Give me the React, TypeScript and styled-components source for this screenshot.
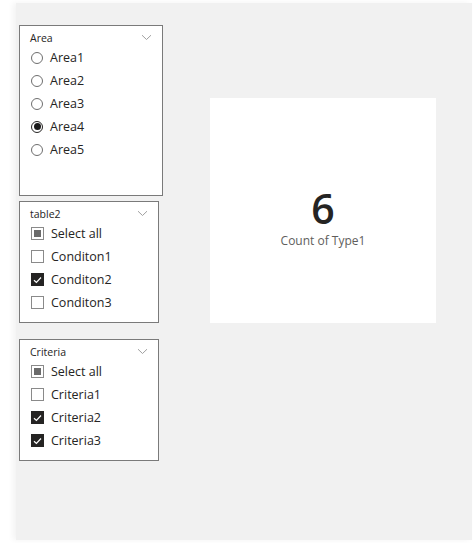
import styled, {createGlobalStyle} from 'styled-components';

const GlobalStyle = createGlobalStyle`
  html, body {
    margin: 0;
    padding: 0;
    background: #ffffff;
  }

  body {
    font-family: 'Open Sans', 'Noto Sans', sans-serif;
    color: #252423;
  }
`;

type Option = {label: string; state: 'on' | 'off' | 'partial'};

const Page = styled.div`
  padding: 3px 0 0 16px;
  width: 474px;
  height: 543px;
  box-sizing: border-box;
`;

const Canvas = styled.div`
  display: flex;
  align-items: flex-start;
  width: 456px;
  height: 537px;
  padding: 22px 0 0 3px;
  box-sizing: border-box;
  background: #f1f1f1;
  box-shadow: -3px 0 6px rgba(0, 0, 0, 0.05);
`;

const Column = styled.div`
  display: flex;
  flex-direction: column;
`;

const Slicer = styled.div<{$width: number; $height: number; $gap: number}>`
  width: ${({$width}) => $width}px;
  height: ${({$height}) => $height}px;
  margin-bottom: ${({$gap}) => $gap}px;
  box-sizing: border-box;
  border: 1px solid #7a7a7a;
  background: #ffffff;
  padding: 3px 10px 0 10px;
`;

const Header = styled.div`
  display: flex;
  align-items: center;
  justify-content: space-between;
  height: 17px;
  font-size: 10.5px;
  color: #252423;
`;

const Chevron = () => (
  <svg width="11" height="7" viewBox="0 0 11 7">
    <path d="M1 1.2 L5.5 5.5 L10 1.2" fill="none" stroke="#a0a0a0" strokeWidth="1" />
  </svg>
);

const Item = styled.div`
  display: flex;
  align-items: center;
  gap: 7px;
  height: 23px;
  padding-left: 1px;
  font-size: 12.5px;
  color: #252423;
`;

const Radio = styled.span<{$on: boolean}>`
  width: 12px;
  height: 12px;
  box-sizing: border-box;
  border-radius: 50%;
  border: 1px solid ${({$on}) => ($on ? '#252423' : '#6e6e6e')};
  display: flex;
  align-items: center;
  justify-content: center;

  &::after {
    content: '';
    display: ${({$on}) => ($on ? 'block' : 'none')};
    width: 7px;
    height: 7px;
    border-radius: 50%;
    background: #1a1a1a;
  }
`;

const Box = styled.span<{$state: Option['state']}>`
  width: 13px;
  height: 13px;
  box-sizing: border-box;
  border: 1px solid ${({$state}) => ($state === 'on' ? '#252423' : '#8a8a8a')};
  background: ${({$state}) => ($state === 'on' ? '#252423' : '#ffffff')};
  display: flex;
  align-items: center;
  justify-content: center;

  &::after {
    content: '';
    display: ${({$state}) => ($state === 'partial' ? 'block' : 'none')};
    width: 7px;
    height: 7px;
    background: #6b6b6b;
  }
`;

const Check = () => (
  <svg width="9" height="8" viewBox="0 0 9 8">
    <path d="M1 4.2 L3.4 6.5 L8 1.5" fill="none" stroke="#ffffff" strokeWidth="1.2" />
  </svg>
);

const Card = styled.div`
  margin: 73px 0 0 47px;
  width: 226px;
  height: 225px;
  background: #ffffff;
  display: flex;
  flex-direction: column;
  align-items: center;
  justify-content: center;
  padding-top: 14px;
  box-sizing: border-box;
`;

const Value = styled.div`
  font-size: 41px;
  font-weight: 600;
  line-height: 44px;
  color: #252423;
`;

const Caption = styled.div`
  font-size: 12px;
  color: #605e5c;
  margin-top: 2px;
`;

const areas = ['Area1', 'Area2', 'Area3', 'Area4', 'Area5'];

const conditions: Option[] = [
  {label: 'Select all', state: 'partial'},
  {label: 'Conditon1', state: 'off'},
  {label: 'Conditon2', state: 'on'},
  {label: 'Conditon3', state: 'off'},
];

const criteria: Option[] = [
  {label: 'Select all', state: 'partial'},
  {label: 'Criteria1', state: 'off'},
  {label: 'Criteria2', state: 'on'},
  {label: 'Criteria3', state: 'on'},
];

const CheckList = ({options}: {options: Option[]}) => (
  <>
    {options.map((o) => (
      <Item key={o.label}>
        <Box $state={o.state}>{o.state === 'on' && <Check />}</Box>
        {o.label}
      </Item>
    ))}
  </>
);

export default function App() {
  return (
    <>
      <GlobalStyle />
      <Page>
        <Canvas>
          <Column>
            <Slicer $width={144} $height={171} $gap={5}>
              <Header>
                Area
                <Chevron />
              </Header>
              {areas.map((a) => (
                <Item key={a}>
                  <Radio $on={a === 'Area4'} />
                  {a}
                </Item>
              ))}
            </Slicer>
            <Slicer $width={140} $height={122} $gap={16}>
              <Header>
                table2
                <Chevron />
              </Header>
              <CheckList options={conditions} />
            </Slicer>
            <Slicer $width={140} $height={122} $gap={0}>
              <Header>
                Criteria
                <Chevron />
              </Header>
              <CheckList options={criteria} />
            </Slicer>
          </Column>
          <Card>
            <Value>6</Value>
            <Caption>Count of Type1</Caption>
          </Card>
        </Canvas>
      </Page>
    </>
  );
}
